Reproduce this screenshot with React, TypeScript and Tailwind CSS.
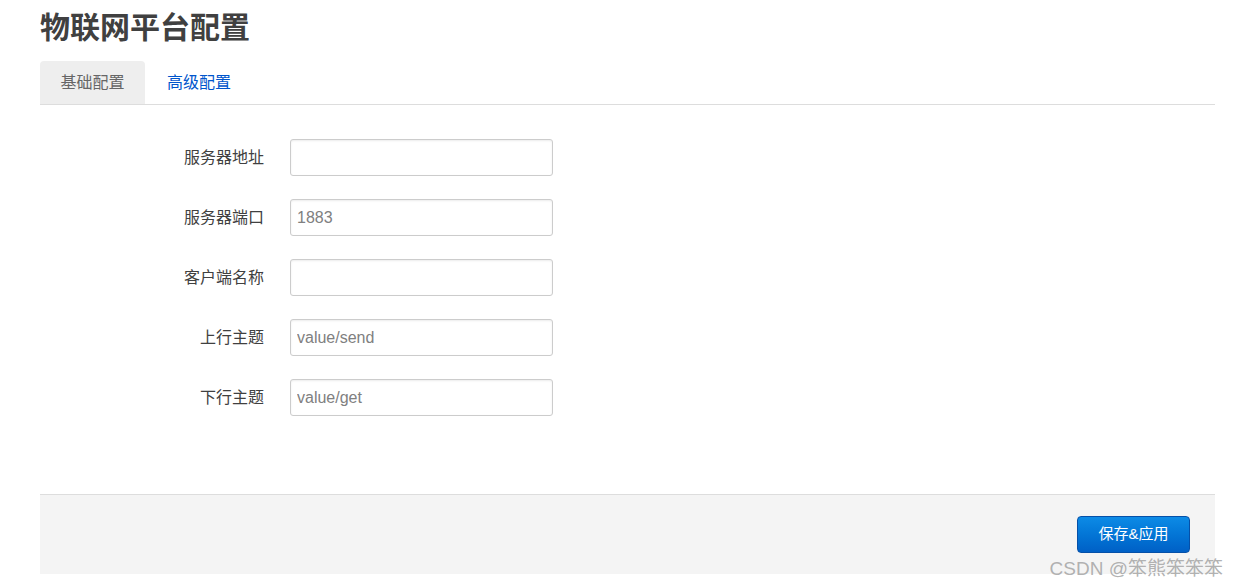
import React from 'react';

const font = "font-['Liberation_Sans','Noto_Sans_CJK_SC',sans-serif]";

const fields = [
  { label: '服务器地址', value: '' },
  { label: '服务器端口', value: '1883' },
  { label: '客户端名称', value: '' },
  { label: '上行主题', value: 'value/send' },
  { label: '下行主题', value: 'value/get' },
];

export default function App() {
  return (
    <div className={`${font} relative h-[588px] w-[1238px] bg-white pl-10 pr-[23px] text-[#404040]`}>
      <h1 className="pt-[8px] text-[30px] font-bold leading-[40px] text-[#404040]">物联网平台配置</h1>

      {/* tabs */}
      <div className="mt-[13px] flex border-b border-[#dddddd]">
        <div className="flex h-[43px] w-[105px] items-center justify-center rounded-t-[4px] bg-[#eeeeee] text-[16px] text-[#666666]">
          基础配置
        </div>
        <div className="flex h-[43px] items-center pl-[22px] text-[16px] text-[#0055cc]">
          高级配置
        </div>
      </div>

      {/* form */}
      <div className="flex flex-col gap-[23px] pt-[34px]">
        {fields.map((f) => (
          <div key={f.label} className="flex h-[37px] items-center">
            <label className="w-[224px] text-right text-[16px] text-[#404040]">{f.label}</label>
            <input
              defaultValue={f.value}
              className="ml-[26px] h-[37px] w-[263px] rounded-[3px] border border-[#cccccc] px-[6px] text-[16px] text-[#808080] shadow-[inset_0_1px_2px_rgba(0,0,0,0.08)] outline-none"
            />
          </div>
        ))}
      </div>

      {/* footer */}
      <div className="mt-[78px] flex h-[80px] justify-end border-t border-[#dddddd] bg-[#f4f4f4] pr-[25px] pt-[21px]">
        <button className="h-[37px] w-[113px] rounded-[4px] border border-[#0550a8] bg-gradient-to-b from-[#0d8be6] to-[#0060c6] text-[15px] text-white">
          保存&amp;应用
        </button>
      </div>

      <div className="absolute bottom-[8px] right-[15px] text-[19px] leading-[22px] text-[#a8a8a8]/90">
        CSDN @笨熊笨笨笨
      </div>
    </div>
  );
}
